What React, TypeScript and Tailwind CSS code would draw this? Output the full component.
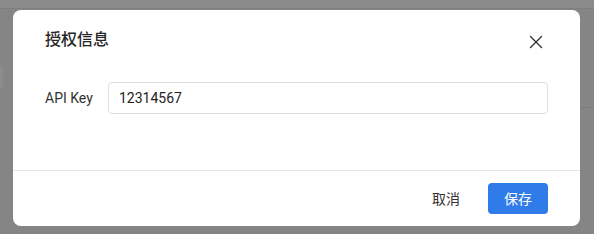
import { X } from 'lucide-react';

export default function App() {
  return (
    <div
      className="relative w-[594px] h-[234px] overflow-hidden bg-[#858585]"
      style={{ fontFamily: 'Roboto, "Noto Sans CJK SC", sans-serif' }}
    >
      {/* Dimmed page behind the dialog */}
      <div className="h-[9px] bg-[#8a8a8a] border-b border-[#7e7e7e]" />
      <div className="flex">
        <div className="mt-[56px] w-[3px] h-[24px] rounded-r bg-[#8c8c8c]" />
        <div className="flex-1" />
        <div className="mt-[98px] w-[14px] border-t border-[#7c7c7c]" />
      </div>

      {/* Dialog */}
      <div className="absolute left-[13px] top-[10px] w-[567px] h-[216px] bg-white rounded-lg flex flex-col">
        <div className="flex items-start justify-between px-8 pt-[18px]">
          <h2 className="text-base leading-6 font-medium text-[#262626]">授权信息</h2>
          <button className="text-[#333] mt-[3px] mr-[1px]">
            <X className="w-[22px] h-[22px]" strokeWidth={1.5} />
          </button>
        </div>

        <div className="flex items-center px-8 mt-[29px]">
          <label className="w-[63px] text-sm text-[#333]">API Key</label>
          <input
            className="flex-1 h-[32px] border border-[#dedde6] rounded px-[10px] text-sm text-[#222] outline-none"
            defaultValue="12314567"
          />
        </div>

        <div className="flex-1" />

        <div className="border-t border-[#e4e3ec] h-[56px] flex items-center justify-end px-8 gap-[28px]">
          <button className="text-sm text-[#333]">取消</button>
          <button className="w-[60px] h-[31px] rounded bg-[#2f7bea] text-sm text-white">保存</button>
        </div>
      </div>
    </div>
  );
}
